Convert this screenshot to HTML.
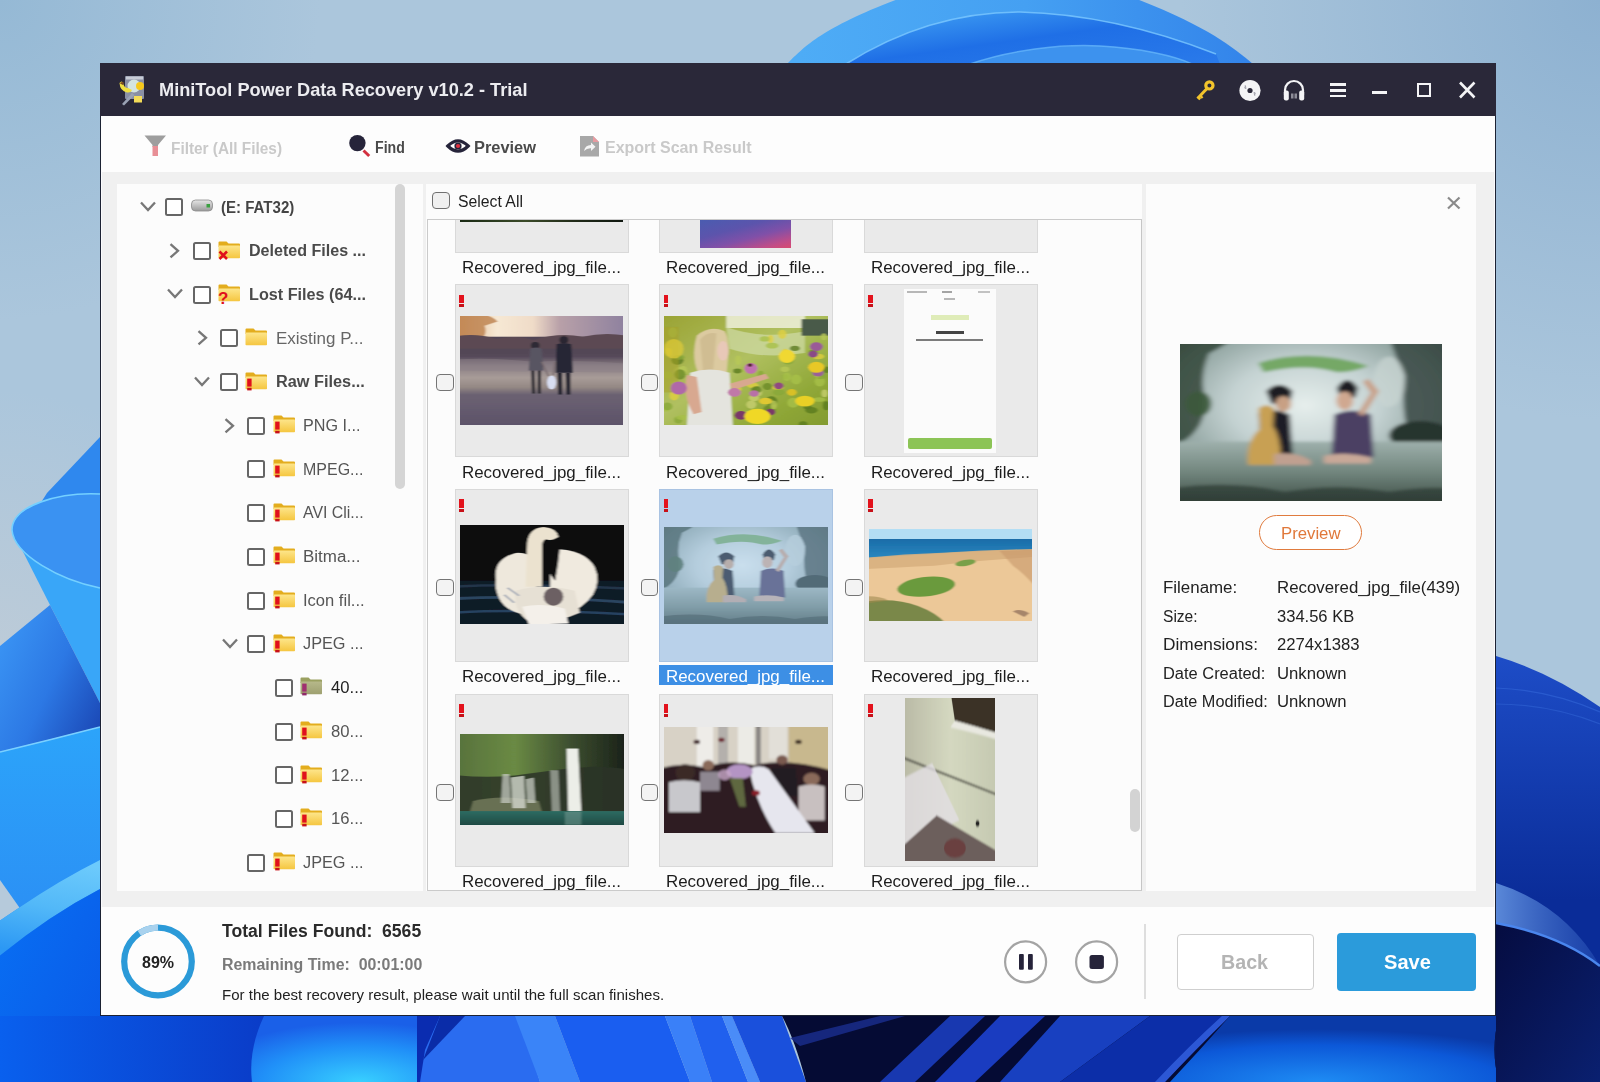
<!DOCTYPE html>
<html><head><meta charset="utf-8"><style>
html,body{margin:0;padding:0;width:1600px;height:1082px;overflow:hidden;background:#b0c8de;}
body{position:relative;font-family:"Liberation Sans",sans-serif;}
.t{position:absolute;white-space:nowrap;}
.r{position:absolute;box-sizing:border-box;}
svg{position:absolute;overflow:visible;}
</style></head><body>
<svg width="1600" height="1082" style="left:0;top:0" viewBox="0 0 1600 1082">
<defs>
<linearGradient id="bgl" x1="0" y1="0" x2="1" y2="1"><stop offset="0" stop-color="#aac5de"/><stop offset="1" stop-color="#b9cde0"/></linearGradient>
<linearGradient id="tri" x1="0" y1="0.2" x2="1" y2="0.9"><stop offset="0" stop-color="#3a94f4"/><stop offset="0.5" stop-color="#2c78e4"/><stop offset="1" stop-color="#1a46b4"/></linearGradient>
<linearGradient id="lowl" x1="0" y1="0" x2="0" y2="1"><stop offset="0" stop-color="#2ca4fa"/><stop offset="1" stop-color="#2a7ef0"/></linearGradient>
<linearGradient id="deepl" x1="0" y1="0" x2="1" y2="1"><stop offset="0" stop-color="#0870f4"/><stop offset="1" stop-color="#0a58e6"/></linearGradient>
<linearGradient id="botl" x1="0" y1="0" x2="1" y2="0"><stop offset="0" stop-color="#0960ee"/><stop offset="1" stop-color="#0a3cc8"/></linearGradient>
<radialGradient id="petal1" cx="0.6" cy="1" r="0.9"><stop offset="0" stop-color="#38d0ff"/><stop offset="0.6" stop-color="#2090f8"/><stop offset="1" stop-color="#1a60e8"/></radialGradient>
<linearGradient id="rblue" gradientUnits="userSpaceOnUse" x1="0" y1="660" x2="0" y2="900"><stop offset="0" stop-color="#1d4cc6"/><stop offset="1" stop-color="#0a2c98"/></linearGradient>
<linearGradient id="rdark" x1="0" y1="0" x2="1" y2="1"><stop offset="0" stop-color="#050c40"/><stop offset="1" stop-color="#0a2070"/></linearGradient>
<linearGradient id="rwedge" x1="0" y1="0" x2="1" y2="0"><stop offset="0" stop-color="#5a88d8"/><stop offset="1" stop-color="#3a68c8" stop-opacity="0.3"/></linearGradient>
<radialGradient id="brglow" cx="0.45" cy="1" r="0.8"><stop offset="0" stop-color="#1e8cf4"/><stop offset="0.7" stop-color="#0c58d8"/><stop offset="1" stop-color="#0a3aa8"/></radialGradient>
<radialGradient id="bloom" cx="0.5" cy="0.3" r="0.6"><stop offset="0" stop-color="#2f80ea"/><stop offset="1" stop-color="#4aa6f4"/></radialGradient>
<linearGradient id="bloom2" x1="0" y1="0" x2="1" y2="1"><stop offset="0" stop-color="#45a8f6"/><stop offset="0.5" stop-color="#1f6fe6"/><stop offset="1" stop-color="#2a7aea"/></linearGradient>
<radialGradient id="cTL" gradientUnits="userSpaceOnUse" cx="0" cy="0" r="320"><stop offset="0" stop-color="#95b9d5"/><stop offset="1" stop-color="#95b9d5" stop-opacity="0"/></radialGradient>
<radialGradient id="cTR" gradientUnits="userSpaceOnUse" cx="1600" cy="0" r="420"><stop offset="0" stop-color="#8db1d1"/><stop offset="1" stop-color="#8db1d1" stop-opacity="0"/></radialGradient>
<radialGradient id="cBL" gradientUnits="userSpaceOnUse" cx="0" cy="650" r="260"><stop offset="0" stop-color="#bccbd8"/><stop offset="1" stop-color="#bccbd8" stop-opacity="0"/></radialGradient>
<linearGradient id="band" x1="0.6" y1="0" x2="0.4" y2="1"><stop offset="0" stop-color="#6ccafc"/><stop offset="0.5" stop-color="#52b8f8"/><stop offset="1" stop-color="#2c98f4"/></linearGradient>
<linearGradient id="bloomO" gradientUnits="userSpaceOnUse" x1="800" y1="0" x2="1250" y2="0"><stop offset="0" stop-color="#4eacf6"/><stop offset="0.5" stop-color="#45a0f2"/><stop offset="1" stop-color="#3384ea"/></linearGradient>
</defs>
<rect width="1600" height="1082" fill="#abc6dc"/>
<rect width="1600" height="1082" fill="url(#cTL)"/>
<rect width="1600" height="1082" fill="url(#cTR)"/>
<rect width="1600" height="1082" fill="url(#cBL)"/>
<!-- top bloom -->
<path d="M787 64 C 812 38, 840 12, 1018 -40 C 1185 8, 1224 40, 1253 64 Z" fill="url(#bloomO)"/>
<path d="M846 64 C 900 30, 960 12, 1020 12 C 1100 14, 1170 36, 1216 54 L1220 64 Z" fill="url(#bloom2)"/>
<path d="M846 64 C 900 30, 960 12, 1020 12 C 1100 14, 1170 36, 1216 54" fill="none" stroke="#7cc8ff" stroke-width="1.5" opacity="0.8"/>
<path d="M970 64 C 1010 50, 1060 44, 1100 46 C 1140 48, 1175 56, 1192 64 Z" fill="#3d92ee"/>
<path d="M970 64 C 1010 50, 1060 44, 1100 46 C 1140 48, 1175 56, 1192 64" fill="none" stroke="#6cbcfc" stroke-width="1.5" opacity="0.7"/>
<!-- left -->
<path d="M100 437 L47 493 L30 520 L100 530 Z" fill="#2f88ee"/>
<path d="M12 530 L50 605 L100 703 L100 588 Z" fill="#39a6f8"/>
<path d="M100 494 C 60 492, 12 505, 12 530 C 14 555, 60 580, 100 588 Z" fill="#3a92f2"/>
<path d="M100 494 C 60 492, 12 505, 12 530 C 14 555, 60 580, 100 588" fill="none" stroke="#74d0ff" stroke-width="1.6"/>
<path d="M50 605 L0 646 L0 752 L100 727 L100 703 Z" fill="url(#tri)"/>
<path d="M0 752 Q 50 740 100 727 L100 1082 L0 1082 Z" fill="url(#lowl)"/>
<path d="M0 752 Q 50 740 100 727" fill="none" stroke="#7ad0ff" stroke-width="1.5"/>
<path d="M0 880 L19.4 907.5 L0 920.5 Z" fill="#b6cadb"/>
<path d="M0 920.5 L19.4 907.5 Q 60 880 100 860 L100 889 Q 50 915 0 955.6 Z" fill="url(#band)"/>
<path d="M0 955.6 Q 50 915 100 889 L100 1082 L0 1082 Z" fill="url(#deepl)"/>
<!-- bottom -->
<rect x="0" y="1016" width="264" height="66" fill="url(#botl)"/>
<path d="M264 1016 Q 248 1050 252 1082 L432 1082 Q 425 1050 417 1016 Z" fill="url(#petal1)"/>
<rect x="417" y="1016" width="30" height="66" fill="#0a2cb0"/>
<path d="M440 1016 L520 1016 L540 1082 L420 1082 L425 1050 Z" fill="#2a6cf0"/>
<path d="M440 1016 L465 1016 L423 1060 Z" fill="#0a2ca8"/>
<path d="M515 1016 L555 1016 L580 1082 L540 1082 Z" fill="#3a84f8"/>
<path d="M555 1016 L665 1016 L690 1082 L580 1082 Z" fill="#1a5ef0"/>
<path d="M665 1016 L690 1016 L712 1082 L690 1082 Z" fill="#3a80f8"/>
<path d="M690 1016 L722 1016 L748 1082 L712 1082 Z" fill="#2060ee"/>
<path d="M722 1016 L732 1016 L760 1082 L748 1082 Z" fill="#4a8cf8"/>
<path d="M732 1016 L782 1016 L806 1082 L760 1082 Z" fill="#1a50dc"/>
<path d="M782 1016 L1600 1016 L1600 1082 L806 1082 Q 795 1040 782 1016 Z" fill="#050b34"/>
<path d="M790 1038 L880 1016 L905 1016 L800 1046 Z" fill="#1a2e90" opacity="0.8"/>
<path d="M880 1082 L950 1016 L985 1016 L915 1082 Z" fill="#1838b0"/>
<path d="M935 1082 L1000 1016 L1045 1016 L975 1082 Z" fill="#1a3cc0"/>
<path d="M1000 1082 L1060 1016 L1150 1016 L1060 1082 Z" fill="#1840c0"/>
<path d="M1060 1082 L1150 1016 L1230 1016 Q 1195 1050 1165 1082 Z" fill="#0c2ea8"/>
<path d="M1230 1016 Q 1195 1050 1165 1082 L1155 1082 Q 1190 1045 1222 1016 Z" fill="#3a6ae8" opacity="0.7"/>
<path d="M1230 1016 L1499 1016 Q 1490 1050 1499 1082 L1170 1082 Q 1200 1050 1230 1016 Z" fill="url(#brglow)"/>
<path d="M1496 1016 L1600 1016 L1600 1082 L1499 1082 Q 1490 1050 1499 1016 Z" fill="#081656"/>
<!-- right -->
<path d="M1496 656 Q 1550 672 1600 707 L1600 1082 L1496 1082 Z" fill="url(#rblue)"/>
<path d="M1496 688 Q 1550 690 1600 712" fill="none" stroke="#3468d8" stroke-width="1.2" opacity="0.6"/>
<path d="M1496 704 Q 1550 704 1600 724" fill="none" stroke="#3468d8" stroke-width="1.2" opacity="0.5"/>
<path d="M1496 923 Q 1560 935 1600 966 L1600 1082 L1496 1082 Z" fill="url(#rdark)"/>
<path d="M1496 883 Q 1565 905 1600 966 Q 1560 935 1496 923 Z" fill="url(#rwedge)"/>
<path d="M1496 923 Q 1560 935 1600 966" fill="none" stroke="#4a86ee" stroke-width="2.5"/>
</svg>
<div class="r" style="left:100.00px;top:63.00px;width:1396.00px;height:953.00px;background:#f0f0f0;border:1px solid #1c2233;"></div><div class="r" style="left:100.00px;top:63.00px;width:1396.00px;height:53.00px;background:#2a2839;"></div><div class="r" style="left:101.00px;top:116.00px;width:1394.00px;height:56.00px;background:#fdfdfd;"></div><div class="r" style="left:101.00px;top:907.00px;width:1394.00px;height:108.00px;background:#fdfdfd;"></div><div class="r" style="left:101.00px;top:171.00px;width:1.30px;height:736.00px;background:#fbfbfd;"></div><div class="r" style="left:1493.70px;top:171.00px;width:1.30px;height:736.00px;background:#fbfbfd;"></div><div class="r" style="left:117.00px;top:184.00px;width:305.50px;height:706.60px;background:#fcfcfc;"></div><div class="r" style="left:425.50px;top:184.00px;width:716.00px;height:707.00px;background:#fcfcfc;"></div><div class="r" style="left:1146.00px;top:184.00px;width:330.00px;height:707.00px;background:#fcfcfc;"></div><svg style="left:118px;top:74px" width="30" height="32" viewBox="0 0 30 32">
<rect x="7" y="2" width="19" height="23" rx="1" fill="#8a90a4"/>
<rect x="8" y="2.5" width="17" height="3" fill="#c8ccd6"/>
<circle cx="16" cy="12" r="6.5" fill="#d4e4e0"/>
<path d="M1.5 9 Q 2 17 9 18.5 Q 13 19 14 16 L 10 14 Q 6 14 5 9 Q 4 6 1.5 9 Z" fill="#f0e040"/>
<path d="M2 9.5 Q 3 7 6 8.5 L 5 11 Z" fill="#7a4a20"/>
<circle cx="22" cy="12" r="4" fill="#f6c81c"/>
<path d="M4 30 L 14 19 L 16.5 21 L 6 31.5 Z" fill="#9aa2b4"/>
<rect x="16" y="22" width="8" height="6.5" fill="#f4dc58"/>
</svg><div class="t" style="left:158.80px;top:80.32px;font-size:19px;line-height:19px;font-weight:700;color:#ececf0;transform:scaleX(0.9570);transform-origin:0 0;">MiniTool Power Data Recovery v10.2 - Trial</div><svg style="left:1194px;top:79px" width="22" height="23" viewBox="0 0 22 23">
<circle cx="15.4" cy="6.4" r="3.6" fill="none" stroke="#f2c42c" stroke-width="3.2"/>
<path d="M13 9.5 L3.5 19.5" stroke="#f2c42c" stroke-width="3"/>
<path d="M6 16.5 L8.6 19 M4.2 18.4 L6.2 20.4" stroke="#f2c42c" stroke-width="2.4"/>
</svg><svg style="left:1238px;top:79px" width="24" height="24" viewBox="0 0 24 24">
<circle cx="12" cy="11.5" r="10.6" fill="#f4f4f6"/>
<circle cx="12" cy="11.5" r="2.6" fill="#2a2839"/>
<path d="M6.5 8.5 L8.3 9.3 M15.7 13.7 L17.5 14.5 M6.8 6.6 L7.8 7.6 M16.2 15.4 L17.2 16.4" stroke="#8a8a98" stroke-width="1.3"/>
</svg><svg style="left:1282px;top:79px" width="24" height="23" viewBox="0 0 24 23">
<path d="M3 16 V11 A9 9 0 0 1 21 11 V16" fill="none" stroke="#f4f4f6" stroke-width="2.2"/>
<rect x="1.8" y="11.5" width="5" height="10" rx="2" fill="#f4f4f6"/>
<rect x="17.2" y="11.5" width="5" height="10" rx="2" fill="#f4f4f6"/>
<rect x="9" y="14.5" width="2.5" height="5" fill="#b8b8c0" opacity="0.7"/><rect x="12.5" y="14.5" width="2.5" height="5" fill="#b8b8c0" opacity="0.7"/>
</svg><div class="r" style="left:1330.00px;top:83.00px;width:15.60px;height:2.80px;background:#f4f4f6;"></div><div class="r" style="left:1330.00px;top:88.80px;width:15.60px;height:2.80px;background:#f4f4f6;"></div><div class="r" style="left:1330.00px;top:94.60px;width:15.60px;height:2.80px;background:#f4f4f6;"></div><div class="r" style="left:1372.00px;top:91.00px;width:15.00px;height:2.80px;background:#f4f4f6;"></div><div class="r" style="left:1417.20px;top:83.20px;width:14.00px;height:14.00px;border:2.6px solid #f4f4f6;"></div><svg style="left:1458px;top:81px" width="18" height="18" viewBox="0 0 18 18">
<path d="M2 1.5 L16.5 16.5 M16.5 1.5 L2 16.5" stroke="#f4f4f6" stroke-width="2.6"/>
</svg><svg style="left:143px;top:134px" width="25" height="24" viewBox="0 0 25 24">
<path d="M1.5 1.5 H23 L15 11 V13 H9.5 V11 Z" fill="#9e9e9e"/>
<rect x="9.5" y="12" width="5.5" height="10" fill="#e88f96"/>
</svg><div class="t" style="left:171.30px;top:140.56px;font-size:16px;line-height:16px;font-weight:700;color:#c9c9c9;transform:scaleX(0.9604);transform-origin:0 0;">Filter (All Files)</div><svg style="left:347px;top:133px" width="26" height="26" viewBox="0 0 26 26">
<circle cx="10.4" cy="10.1" r="8.2" fill="#26243a"/>
<path d="M16.5 17.5 L22.2 23" stroke="#d3303f" stroke-width="3"/>
</svg><div class="t" style="left:375.40px;top:140.16px;font-size:16px;line-height:16px;font-weight:700;color:#4a4a4a;transform:scaleX(0.8826);transform-origin:0 0;">Find</div><svg style="left:446px;top:134px" width="24" height="24" viewBox="0 0 24 24">
<path d="M1.8 12 Q12 1.8 22.2 12 Q12 22.2 1.8 12 Z" fill="#fff" stroke="#26243a" stroke-width="3.2"/>
<circle cx="12" cy="12" r="3.6" fill="#26243a"/>
<circle cx="12" cy="12" r="2.1" fill="#e03040"/>
</svg><div class="t" style="left:473.80px;top:140.16px;font-size:16px;line-height:16px;font-weight:700;color:#4a4a4a;transform:scaleX(1.0251);transform-origin:0 0;">Preview</div><svg style="left:578px;top:134px" width="23" height="24" viewBox="0 0 23 24">
<path d="M2 2 H15 L21 8 V22.5 H2 Z" fill="#a8a8a8"/>
<path d="M15 2 L21 8 H15 Z" fill="#e89aa0"/>
<path d="M6 17 Q7 11 13 11 V8.5 L17.5 12.8 L13 17 V14.3 Q9 14 6 17 Z" fill="#f4f4f4"/>
</svg><div class="t" style="left:605.00px;top:140.36px;font-size:16px;line-height:16px;font-weight:700;color:#c9c9c9;transform:scaleX(0.9986);transform-origin:0 0;">Export Scan Result</div><div class="r" style="left:394.60px;top:184.00px;width:10.40px;height:304.50px;background:#d5d5d5;border-radius:5px;"></div><svg style="left:139.70px;top:201.10px" width="17" height="12" viewBox="0 0 17 12"><path d="M1 1.5 L8 9 L15 1.5" fill="none" stroke="#777" stroke-width="2.3"/></svg><div class="r" style="left:165.20px;top:198.40px;width:18.30px;height:18.00px;border:2.2px solid #666;border-radius:2.5px;background:#fff;"></div><svg style="left:190.70px;top:199.40px" width="23" height="14" viewBox="0 0 23 14">
<defs><linearGradient id="drv" x1="0" y1="0" x2="0" y2="1"><stop offset="0" stop-color="#e6e6e6"/><stop offset="1" stop-color="#9a9a9a"/></linearGradient></defs>
<rect x="0.5" y="1" width="21" height="11" rx="4" fill="url(#drv)" stroke="#8a8a8a" stroke-width="0.8"/>
<rect x="15.5" y="5" width="3.5" height="3.5" fill="#3aa040"/></svg><div class="t" style="left:221.20px;top:199.66px;font-size:16px;line-height:16px;font-weight:700;color:#444;transform:scaleX(0.9405);transform-origin:0 0;">(E: FAT32)</div><svg style="left:169.20px;top:243.08px" width="12" height="16" viewBox="0 0 12 16"><path d="M1.5 1.2 L9 7.8 L1.5 14.4" fill="none" stroke="#777" stroke-width="2.3"/></svg><div class="r" style="left:192.50px;top:242.08px;width:18.30px;height:18.00px;border:2.2px solid #666;border-radius:2.5px;background:#fff;"></div><svg style="left:218.10px;top:240.58px" width="23" height="19" viewBox="0 0 23 19">
<defs><linearGradient id="fg218240" x1="0" y1="0" x2="0" y2="1"><stop offset="0" stop-color="#fde58a"/><stop offset="1" stop-color="#f5c640"/></linearGradient></defs>
<path d="M0.5 1.5 Q0.5 0.5 1.5 0.5 H8.5 L10.5 2.5 H21 Q22 2.5 22 3.5 V6 H0.5 Z" fill="#e3ad1e"/>
<rect x="0.5" y="4.6" width="21.5" height="12.6" rx="0.8" fill="url(#fg218240)"/>
<path d="M1.5 10.5 L9 18 M9 10.5 L1.5 18" stroke="#e0101c" stroke-width="2.6"/></svg><div class="t" style="left:248.50px;top:243.34px;font-size:16px;line-height:16px;font-weight:700;color:#4a4a4a;transform:scaleX(1.0036);transform-origin:0 0;">Deleted Files ...</div><svg style="left:167.00px;top:288.46px" width="17" height="12" viewBox="0 0 17 12"><path d="M1 1.5 L8 9 L15 1.5" fill="none" stroke="#777" stroke-width="2.3"/></svg><div class="r" style="left:192.50px;top:285.76px;width:18.30px;height:18.00px;border:2.2px solid #666;border-radius:2.5px;background:#fff;"></div><svg style="left:218.10px;top:284.26px" width="23" height="19" viewBox="0 0 23 19">
<defs><linearGradient id="fg218284" x1="0" y1="0" x2="0" y2="1"><stop offset="0" stop-color="#fde58a"/><stop offset="1" stop-color="#f5c640"/></linearGradient></defs>
<path d="M0.5 1.5 Q0.5 0.5 1.5 0.5 H8.5 L10.5 2.5 H21 Q22 2.5 22 3.5 V6 H0.5 Z" fill="#e3ad1e"/>
<rect x="0.5" y="4.6" width="21.5" height="12.6" rx="0.8" fill="url(#fg218284)"/>
<text x="0" y="19.5" font-family="Liberation Sans" font-weight="700" font-size="17" fill="#e0101c">?</text></svg><div class="t" style="left:248.50px;top:287.02px;font-size:16px;line-height:16px;font-weight:700;color:#4a4a4a;transform:scaleX(1.0113);transform-origin:0 0;">Lost Files (64...</div><svg style="left:196.50px;top:330.44px" width="12" height="16" viewBox="0 0 12 16"><path d="M1.5 1.2 L9 7.8 L1.5 14.4" fill="none" stroke="#777" stroke-width="2.3"/></svg><div class="r" style="left:219.80px;top:329.44px;width:18.30px;height:18.00px;border:2.2px solid #666;border-radius:2.5px;background:#fff;"></div><svg style="left:245.40px;top:327.94px" width="23" height="19" viewBox="0 0 23 19">
<defs><linearGradient id="fg245327" x1="0" y1="0" x2="0" y2="1"><stop offset="0" stop-color="#fde58a"/><stop offset="1" stop-color="#f5c640"/></linearGradient></defs>
<path d="M0.5 1.5 Q0.5 0.5 1.5 0.5 H8.5 L10.5 2.5 H21 Q22 2.5 22 3.5 V6 H0.5 Z" fill="#e3ad1e"/>
<rect x="0.5" y="4.6" width="21.5" height="12.6" rx="0.8" fill="url(#fg245327)"/>
</svg><div class="t" style="left:275.80px;top:330.70px;font-size:16px;line-height:16px;font-weight:400;color:#666;transform:scaleX(1.0616);transform-origin:0 0;">Existing P...</div><svg style="left:194.30px;top:375.82px" width="17" height="12" viewBox="0 0 17 12"><path d="M1 1.5 L8 9 L15 1.5" fill="none" stroke="#777" stroke-width="2.3"/></svg><div class="r" style="left:219.80px;top:373.12px;width:18.30px;height:18.00px;border:2.2px solid #666;border-radius:2.5px;background:#fff;"></div><svg style="left:245.40px;top:371.62px" width="23" height="19" viewBox="0 0 23 19">
<defs><linearGradient id="fg245371" x1="0" y1="0" x2="0" y2="1"><stop offset="0" stop-color="#fde58a"/><stop offset="1" stop-color="#f5c640"/></linearGradient></defs>
<path d="M0.5 1.5 Q0.5 0.5 1.5 0.5 H8.5 L10.5 2.5 H21 Q22 2.5 22 3.5 V6 H0.5 Z" fill="#e3ad1e"/>
<rect x="0.5" y="4.6" width="21.5" height="12.6" rx="0.8" fill="url(#fg245371)"/>
<rect x="2.2" y="6.6" width="4.4" height="8" fill="#e0101c"/><rect x="2.2" y="15.8" width="4.4" height="2.6" fill="#c81018"/></svg><div class="t" style="left:275.80px;top:374.38px;font-size:16px;line-height:16px;font-weight:700;color:#4a4a4a;transform:scaleX(1.0179);transform-origin:0 0;">Raw Files...</div><svg style="left:223.90px;top:417.80px" width="12" height="16" viewBox="0 0 12 16"><path d="M1.5 1.2 L9 7.8 L1.5 14.4" fill="none" stroke="#777" stroke-width="2.3"/></svg><div class="r" style="left:247.20px;top:416.80px;width:18.30px;height:18.00px;border:2.2px solid #666;border-radius:2.5px;background:#fff;"></div><svg style="left:272.80px;top:415.30px" width="23" height="19" viewBox="0 0 23 19">
<defs><linearGradient id="fg272415" x1="0" y1="0" x2="0" y2="1"><stop offset="0" stop-color="#fde58a"/><stop offset="1" stop-color="#f5c640"/></linearGradient></defs>
<path d="M0.5 1.5 Q0.5 0.5 1.5 0.5 H8.5 L10.5 2.5 H21 Q22 2.5 22 3.5 V6 H0.5 Z" fill="#e3ad1e"/>
<rect x="0.5" y="4.6" width="21.5" height="12.6" rx="0.8" fill="url(#fg272415)"/>
<rect x="2.2" y="6.6" width="4.4" height="8" fill="#e0101c"/><rect x="2.2" y="15.8" width="4.4" height="2.6" fill="#c81018"/></svg><div class="t" style="left:303.20px;top:418.06px;font-size:16px;line-height:16px;font-weight:400;color:#555;transform:scaleX(1.0104);transform-origin:0 0;">PNG I...</div><div class="r" style="left:247.20px;top:460.48px;width:18.30px;height:18.00px;border:2.2px solid #666;border-radius:2.5px;background:#fff;"></div><svg style="left:272.80px;top:458.98px" width="23" height="19" viewBox="0 0 23 19">
<defs><linearGradient id="fg272458" x1="0" y1="0" x2="0" y2="1"><stop offset="0" stop-color="#fde58a"/><stop offset="1" stop-color="#f5c640"/></linearGradient></defs>
<path d="M0.5 1.5 Q0.5 0.5 1.5 0.5 H8.5 L10.5 2.5 H21 Q22 2.5 22 3.5 V6 H0.5 Z" fill="#e3ad1e"/>
<rect x="0.5" y="4.6" width="21.5" height="12.6" rx="0.8" fill="url(#fg272458)"/>
<rect x="2.2" y="6.6" width="4.4" height="8" fill="#e0101c"/><rect x="2.2" y="15.8" width="4.4" height="2.6" fill="#c81018"/></svg><div class="t" style="left:303.20px;top:461.74px;font-size:16px;line-height:16px;font-weight:400;color:#555;transform:scaleX(0.9991);transform-origin:0 0;">MPEG...</div><div class="r" style="left:247.20px;top:504.16px;width:18.30px;height:18.00px;border:2.2px solid #666;border-radius:2.5px;background:#fff;"></div><svg style="left:272.80px;top:502.66px" width="23" height="19" viewBox="0 0 23 19">
<defs><linearGradient id="fg272502" x1="0" y1="0" x2="0" y2="1"><stop offset="0" stop-color="#fde58a"/><stop offset="1" stop-color="#f5c640"/></linearGradient></defs>
<path d="M0.5 1.5 Q0.5 0.5 1.5 0.5 H8.5 L10.5 2.5 H21 Q22 2.5 22 3.5 V6 H0.5 Z" fill="#e3ad1e"/>
<rect x="0.5" y="4.6" width="21.5" height="12.6" rx="0.8" fill="url(#fg272502)"/>
<rect x="2.2" y="6.6" width="4.4" height="8" fill="#e0101c"/><rect x="2.2" y="15.8" width="4.4" height="2.6" fill="#c81018"/></svg><div class="t" style="left:303.20px;top:505.42px;font-size:16px;line-height:16px;font-weight:400;color:#555;transform:scaleX(0.9927);transform-origin:0 0;">AVI Cli...</div><div class="r" style="left:247.20px;top:547.84px;width:18.30px;height:18.00px;border:2.2px solid #666;border-radius:2.5px;background:#fff;"></div><svg style="left:272.80px;top:546.34px" width="23" height="19" viewBox="0 0 23 19">
<defs><linearGradient id="fg272546" x1="0" y1="0" x2="0" y2="1"><stop offset="0" stop-color="#fde58a"/><stop offset="1" stop-color="#f5c640"/></linearGradient></defs>
<path d="M0.5 1.5 Q0.5 0.5 1.5 0.5 H8.5 L10.5 2.5 H21 Q22 2.5 22 3.5 V6 H0.5 Z" fill="#e3ad1e"/>
<rect x="0.5" y="4.6" width="21.5" height="12.6" rx="0.8" fill="url(#fg272546)"/>
<rect x="2.2" y="6.6" width="4.4" height="8" fill="#e0101c"/><rect x="2.2" y="15.8" width="4.4" height="2.6" fill="#c81018"/></svg><div class="t" style="left:303.20px;top:549.10px;font-size:16px;line-height:16px;font-weight:400;color:#555;transform:scaleX(1.0602);transform-origin:0 0;">Bitma...</div><div class="r" style="left:247.20px;top:591.52px;width:18.30px;height:18.00px;border:2.2px solid #666;border-radius:2.5px;background:#fff;"></div><svg style="left:272.80px;top:590.02px" width="23" height="19" viewBox="0 0 23 19">
<defs><linearGradient id="fg272590" x1="0" y1="0" x2="0" y2="1"><stop offset="0" stop-color="#fde58a"/><stop offset="1" stop-color="#f5c640"/></linearGradient></defs>
<path d="M0.5 1.5 Q0.5 0.5 1.5 0.5 H8.5 L10.5 2.5 H21 Q22 2.5 22 3.5 V6 H0.5 Z" fill="#e3ad1e"/>
<rect x="0.5" y="4.6" width="21.5" height="12.6" rx="0.8" fill="url(#fg272590)"/>
<rect x="2.2" y="6.6" width="4.4" height="8" fill="#e0101c"/><rect x="2.2" y="15.8" width="4.4" height="2.6" fill="#c81018"/></svg><div class="t" style="left:303.20px;top:592.78px;font-size:16px;line-height:16px;font-weight:400;color:#555;transform:scaleX(1.0339);transform-origin:0 0;">Icon fil...</div><svg style="left:221.70px;top:637.90px" width="17" height="12" viewBox="0 0 17 12"><path d="M1 1.5 L8 9 L15 1.5" fill="none" stroke="#777" stroke-width="2.3"/></svg><div class="r" style="left:247.20px;top:635.20px;width:18.30px;height:18.00px;border:2.2px solid #666;border-radius:2.5px;background:#fff;"></div><svg style="left:272.80px;top:633.70px" width="23" height="19" viewBox="0 0 23 19">
<defs><linearGradient id="fg272633" x1="0" y1="0" x2="0" y2="1"><stop offset="0" stop-color="#fde58a"/><stop offset="1" stop-color="#f5c640"/></linearGradient></defs>
<path d="M0.5 1.5 Q0.5 0.5 1.5 0.5 H8.5 L10.5 2.5 H21 Q22 2.5 22 3.5 V6 H0.5 Z" fill="#e3ad1e"/>
<rect x="0.5" y="4.6" width="21.5" height="12.6" rx="0.8" fill="url(#fg272633)"/>
<rect x="2.2" y="6.6" width="4.4" height="8" fill="#e0101c"/><rect x="2.2" y="15.8" width="4.4" height="2.6" fill="#c81018"/></svg><div class="t" style="left:303.20px;top:636.46px;font-size:16px;line-height:16px;font-weight:400;color:#555;transform:scaleX(1.0172);transform-origin:0 0;">JPEG ...</div><div class="r" style="left:274.50px;top:678.88px;width:18.30px;height:18.00px;border:2.2px solid #666;border-radius:2.5px;background:#fff;"></div><svg style="left:300.10px;top:677.38px" width="23" height="19" viewBox="0 0 23 19">
<defs><linearGradient id="fg300677" x1="0" y1="0" x2="0" y2="1"><stop offset="0" stop-color="#b6b88a"/><stop offset="1" stop-color="#9ea070"/></linearGradient></defs>
<path d="M0.5 1.5 Q0.5 0.5 1.5 0.5 H8.5 L10.5 2.5 H21 Q22 2.5 22 3.5 V6 H0.5 Z" fill="#9aa060"/>
<rect x="0.5" y="4.6" width="21.5" height="12.6" rx="0.8" fill="url(#fg300677)"/>
<rect x="2.2" y="6.6" width="4.4" height="8" fill="#a03070"/><rect x="2.2" y="15.8" width="4.4" height="2.6" fill="#902868"/></svg><div class="t" style="left:330.50px;top:680.14px;font-size:16px;line-height:16px;font-weight:400;color:#222;transform:scaleX(1.0404);transform-origin:0 0;">40...</div><div class="r" style="left:274.50px;top:722.56px;width:18.30px;height:18.00px;border:2.2px solid #666;border-radius:2.5px;background:#fff;"></div><svg style="left:300.10px;top:721.06px" width="23" height="19" viewBox="0 0 23 19">
<defs><linearGradient id="fg300721" x1="0" y1="0" x2="0" y2="1"><stop offset="0" stop-color="#fde58a"/><stop offset="1" stop-color="#f5c640"/></linearGradient></defs>
<path d="M0.5 1.5 Q0.5 0.5 1.5 0.5 H8.5 L10.5 2.5 H21 Q22 2.5 22 3.5 V6 H0.5 Z" fill="#e3ad1e"/>
<rect x="0.5" y="4.6" width="21.5" height="12.6" rx="0.8" fill="url(#fg300721)"/>
<rect x="2.2" y="6.6" width="4.4" height="8" fill="#e0101c"/><rect x="2.2" y="15.8" width="4.4" height="2.6" fill="#c81018"/></svg><div class="t" style="left:330.50px;top:723.82px;font-size:16px;line-height:16px;font-weight:400;color:#555;transform:scaleX(1.0404);transform-origin:0 0;">80...</div><div class="r" style="left:274.50px;top:766.24px;width:18.30px;height:18.00px;border:2.2px solid #666;border-radius:2.5px;background:#fff;"></div><svg style="left:300.10px;top:764.74px" width="23" height="19" viewBox="0 0 23 19">
<defs><linearGradient id="fg300764" x1="0" y1="0" x2="0" y2="1"><stop offset="0" stop-color="#fde58a"/><stop offset="1" stop-color="#f5c640"/></linearGradient></defs>
<path d="M0.5 1.5 Q0.5 0.5 1.5 0.5 H8.5 L10.5 2.5 H21 Q22 2.5 22 3.5 V6 H0.5 Z" fill="#e3ad1e"/>
<rect x="0.5" y="4.6" width="21.5" height="12.6" rx="0.8" fill="url(#fg300764)"/>
<rect x="2.2" y="6.6" width="4.4" height="8" fill="#e0101c"/><rect x="2.2" y="15.8" width="4.4" height="2.6" fill="#c81018"/></svg><div class="t" style="left:330.50px;top:767.50px;font-size:16px;line-height:16px;font-weight:400;color:#555;transform:scaleX(1.0404);transform-origin:0 0;">12...</div><div class="r" style="left:274.50px;top:809.92px;width:18.30px;height:18.00px;border:2.2px solid #666;border-radius:2.5px;background:#fff;"></div><svg style="left:300.10px;top:808.42px" width="23" height="19" viewBox="0 0 23 19">
<defs><linearGradient id="fg300808" x1="0" y1="0" x2="0" y2="1"><stop offset="0" stop-color="#fde58a"/><stop offset="1" stop-color="#f5c640"/></linearGradient></defs>
<path d="M0.5 1.5 Q0.5 0.5 1.5 0.5 H8.5 L10.5 2.5 H21 Q22 2.5 22 3.5 V6 H0.5 Z" fill="#e3ad1e"/>
<rect x="0.5" y="4.6" width="21.5" height="12.6" rx="0.8" fill="url(#fg300808)"/>
<rect x="2.2" y="6.6" width="4.4" height="8" fill="#e0101c"/><rect x="2.2" y="15.8" width="4.4" height="2.6" fill="#c81018"/></svg><div class="t" style="left:330.50px;top:811.18px;font-size:16px;line-height:16px;font-weight:400;color:#555;transform:scaleX(1.0404);transform-origin:0 0;">16...</div><div class="r" style="left:247.20px;top:853.60px;width:18.30px;height:18.00px;border:2.2px solid #666;border-radius:2.5px;background:#fff;"></div><svg style="left:272.80px;top:852.10px" width="23" height="19" viewBox="0 0 23 19">
<defs><linearGradient id="fg272852" x1="0" y1="0" x2="0" y2="1"><stop offset="0" stop-color="#fde58a"/><stop offset="1" stop-color="#f5c640"/></linearGradient></defs>
<path d="M0.5 1.5 Q0.5 0.5 1.5 0.5 H8.5 L10.5 2.5 H21 Q22 2.5 22 3.5 V6 H0.5 Z" fill="#e3ad1e"/>
<rect x="0.5" y="4.6" width="21.5" height="12.6" rx="0.8" fill="url(#fg272852)"/>
<rect x="2.2" y="6.6" width="4.4" height="8" fill="#e0101c"/><rect x="2.2" y="15.8" width="4.4" height="2.6" fill="#c81018"/></svg><div class="t" style="left:303.20px;top:854.86px;font-size:16px;line-height:16px;font-weight:400;color:#555;transform:scaleX(1.0172);transform-origin:0 0;">JPEG ...</div><div class="r" style="left:427.00px;top:218.50px;width:714.50px;height:672.00px;border:1px solid #cacaca;border-right:1px solid #c6c6c6;"></div><div class="r" style="left:432.40px;top:192.30px;width:17.60px;height:17.20px;border:1.8px solid #707070;border-radius:4px;background:#f0f0f0;"></div><div class="t" style="left:457.80px;top:194.26px;font-size:16px;line-height:16px;font-weight:400;color:#1e1e1e;transform:scaleX(0.9861);transform-origin:0 0;">Select All</div><div style="position:absolute;left:428px;top:219.5px;width:712px;height:670.5px;overflow:hidden"><div class="r" style="left:27.00px;top:-139.85px;width:174.00px;height:173.00px;background:#eaeaea;border:1px solid #d9d9d9;"></div><div class="r" style="left:31.60px;top:0.00px;width:163.90px;height:2.8px;background:linear-gradient(90deg,#1a2a14,#3a4a28 40%,#202a18 70%,#101810)"></div><div class="r" style="left:8.40px;top:-50.25px;width:17.80px;height:17.40px;border:1.7px solid #757575;border-radius:4px;background:#f3f3f3;"></div><div class="t" style="left:33.60px;top:39.36px;font-size:17px;line-height:17px;font-weight:400;color:#1c1c1c;transform:scaleX(0.9949);transform-origin:0 0;">Recovered_jpg_file...</div><div class="r" style="left:231.30px;top:-139.85px;width:174.00px;height:173.00px;background:#eaeaea;border:1px solid #d9d9d9;"></div><div class="r" style="left:271.60px;top:0.00px;width:91.70px;height:28.60px;background:linear-gradient(165deg,#4a5cb0 0%,#5c54ac 35%,#8050a8 60%,#c04c88 85%,#d84a70 100%)"></div><div class="r" style="left:212.70px;top:-50.25px;width:17.80px;height:17.40px;border:1.7px solid #757575;border-radius:4px;background:#f3f3f3;"></div><div class="t" style="left:237.90px;top:39.36px;font-size:17px;line-height:17px;font-weight:400;color:#1c1c1c;transform:scaleX(0.9949);transform-origin:0 0;">Recovered_jpg_file...</div><div class="r" style="left:436.00px;top:-139.85px;width:174.00px;height:173.00px;background:#eaeaea;border:1px solid #d9d9d9;"></div><div class="r" style="left:417.40px;top:-50.25px;width:17.80px;height:17.40px;border:1.7px solid #757575;border-radius:4px;background:#f3f3f3;"></div><div class="t" style="left:442.60px;top:39.36px;font-size:17px;line-height:17px;font-weight:400;color:#1c1c1c;transform:scaleX(0.9949);transform-origin:0 0;">Recovered_jpg_file...</div><div class="r" style="left:27.00px;top:64.90px;width:174.00px;height:173.00px;background:#eaeaea;border:1px solid #d9d9d9;"></div><svg style="left:31.60px;top:96.90px;overflow:hidden" width="163.60" height="109.00" viewBox="0 0 100 100" preserveAspectRatio="none"><defs><filter id="pf1" x="-5%" y="-5%" width="110%" height="110%"><feGaussianBlur stdDeviation="0.6"/></filter><linearGradient id="pf1sky" x1="0" y1="0" x2="1" y2="0"><stop offset="0" stop-color="#e0b080"/><stop offset="0.25" stop-color="#f6e8d4"/><stop offset="0.45" stop-color="#f0dcc8"/><stop offset="0.6" stop-color="#b8a0a8"/><stop offset="1" stop-color="#8a7e9e"/></linearGradient>
<linearGradient id="pf1g" x1="0" y1="0" x2="0" y2="1"><stop offset="0" stop-color="#4e4050"/><stop offset="0.38" stop-color="#544858"/><stop offset="0.46" stop-color="#8a7e84"/><stop offset="0.56" stop-color="#a89c98"/><stop offset="0.64" stop-color="#948884"/><stop offset="0.7" stop-color="#6c6272"/><stop offset="1" stop-color="#5a5068"/></linearGradient></defs><g filter=url(#pf1)><rect x="-5" y="-5" width="110" height="110" fill="url(#pf1g)"/>
<rect x="-5" y="-5" width="110" height="24" fill="url(#pf1sky)"/>
<path d="M-5 -5 L10 -3 Q 20 0 23 5 L15 9 Q 17 16 13 22 L-5 24 Z" fill="#b87a44" opacity="0.75"/>
<path d="M-5 19 Q 10 15 22 21 Q 35 17 45 22 Q 60 15 75 19 Q 90 14 105 19 L105 30 L-5 30 Z" fill="#5c4a52"/>
<path d="M-5 40 Q 20 38 45 42 Q 70 40 105 44 L105 52 L-5 50 Z" fill="#8c8088" opacity="0.5"/>
<ellipse cx="46" cy="27" rx="2.6" ry="3.2" fill="#2e2a34"/>
<path d="M43 30 Q 46.5 28 50 30 L51 50 L42 50 Z" fill="#585462"/>
<path d="M43.5 50 L45.5 50 L46 71 L44 71 Z M47.5 50 L49.5 50 L49.5 71 L47.5 71 Z" fill="#28262e"/>
<ellipse cx="63.5" cy="22" rx="2.7" ry="3.4" fill="#2a2630"/>
<path d="M59 26 Q 63.5 24 68 26 L69 52 L58.5 52 Z" fill="#262636"/>
<path d="M59.5 52 L62.5 52 L62.5 72 L60 72 Z M64.5 52 L67.5 52 L67.5 72 L65 72 Z" fill="#22222e"/>
<ellipse cx="56" cy="61" rx="2.8" ry="6.5" fill="#d8def2"/>
<path d="M50 42 L54 55 M58 42 L57 54" stroke="#7a6c70" stroke-width="1"/></g></svg><div class="r" style="left:31.40px;top:75.40px;width:4.50px;height:8.20px;background:#e3121c;"></div><div class="r" style="left:31.40px;top:84.50px;width:4.50px;height:3.00px;background:#c81018;"></div><div class="r" style="left:8.40px;top:154.50px;width:17.80px;height:17.40px;border:1.7px solid #757575;border-radius:4px;background:#f3f3f3;"></div><div class="t" style="left:33.60px;top:244.11px;font-size:17px;line-height:17px;font-weight:400;color:#1c1c1c;transform:scaleX(0.9949);transform-origin:0 0;">Recovered_jpg_file...</div><div class="r" style="left:231.30px;top:64.90px;width:174.00px;height:173.00px;background:#eaeaea;border:1px solid #d9d9d9;"></div><svg style="left:236.30px;top:96.90px;overflow:hidden" width="163.80" height="109.10" viewBox="0 0 100 100" preserveAspectRatio="none"><defs><filter id="pf2" x="-5%" y="-5%" width="110%" height="110%"><feGaussianBlur stdDeviation="0.55"/></filter><linearGradient id="pf2m" x1="0" y1="0" x2="1" y2="1"><stop offset="0" stop-color="#98a030"/><stop offset="0.45" stop-color="#b0c060"/><stop offset="0.75" stop-color="#90a838"/><stop offset="1" stop-color="#80982e"/></linearGradient></defs><g filter=url(#pf2)><rect x="-5" y="-5" width="110" height="110" fill="url(#pf2m)"/>
<rect x="38" y="-5" width="48" height="16" fill="#eef0dc" opacity="0.85"/>
<path d="M38 10 Q 60 22 86 14 L86 34 Q 60 40 40 30 Z" fill="#d0dca8" opacity="0.7"/>
<rect x="84" y="3" width="21" height="15" fill="#4a5a48"/><ellipse cx="65.1" cy="21.2" rx="1.7" ry="3.7" fill="#e0d040" opacity="0.8"/><ellipse cx="91.0" cy="33.2" rx="2.6" ry="2.2" fill="#6a8a28" opacity="0.8"/><ellipse cx="9.1" cy="51.1" rx="2.9" ry="4.8" fill="#b8c858" opacity="0.8"/><ellipse cx="63.1" cy="64.6" rx="2.9" ry="3.2" fill="#6a8a28" opacity="0.8"/><ellipse cx="97.6" cy="19.0" rx="1.8" ry="3.3" fill="#b8c858" opacity="0.8"/><ellipse cx="54.1" cy="63.5" rx="3.5" ry="2.5" fill="#e0d040" opacity="0.8"/><ellipse cx="58.2" cy="69.3" rx="1.7" ry="4.1" fill="#c8d070" opacity="0.8"/><ellipse cx="56.4" cy="67.6" rx="3.2" ry="3.3" fill="#5a7a20" opacity="0.8"/><ellipse cx="45.3" cy="40.5" rx="1.9" ry="4.3" fill="#b8c858" opacity="0.8"/><ellipse cx="8.2" cy="40.5" rx="3.7" ry="4.2" fill="#5a7a20" opacity="0.8"/><ellipse cx="11.8" cy="50.5" rx="2.4" ry="4.8" fill="#b8c858" opacity="0.8"/><ellipse cx="7.8" cy="62.4" rx="3.7" ry="2.9" fill="#b8c858" opacity="0.8"/><ellipse cx="69.5" cy="65.5" rx="3.5" ry="2.2" fill="#e0d040" opacity="0.8"/><ellipse cx="9.4" cy="37.9" rx="3.2" ry="2.2" fill="#88a838" opacity="0.8"/><ellipse cx="70.1" cy="70.0" rx="3.6" ry="2.9" fill="#88a838" opacity="0.8"/><ellipse cx="2.3" cy="54.2" rx="3.0" ry="3.5" fill="#a8c048" opacity="0.8"/><ellipse cx="73.8" cy="48.8" rx="2.7" ry="2.5" fill="#b8c858" opacity="0.8"/><ellipse cx="55.0" cy="75.0" rx="3.2" ry="3.1" fill="#c8d070" opacity="0.8"/><ellipse cx="1.2" cy="85.6" rx="2.2" ry="2.0" fill="#a8c048" opacity="0.8"/><ellipse cx="56.6" cy="96.0" rx="3.6" ry="4.9" fill="#88a838" opacity="0.8"/><ellipse cx="65.5" cy="77.9" rx="3.7" ry="4.3" fill="#5a7a20" opacity="0.8"/><ellipse cx="87.5" cy="82.8" rx="2.5" ry="3.2" fill="#5a7a20" opacity="0.8"/><ellipse cx="48.2" cy="49.0" rx="1.7" ry="2.6" fill="#a8c048" opacity="0.8"/><ellipse cx="5.3" cy="15.0" rx="2.8" ry="4.8" fill="#a8c048" opacity="0.8"/><ellipse cx="61.4" cy="21.0" rx="3.0" ry="2.4" fill="#a8c048" opacity="0.8"/><ellipse cx="84.9" cy="99.4" rx="2.7" ry="2.9" fill="#5a7a20" opacity="0.8"/><ellipse cx="74.0" cy="55.7" rx="1.9" ry="2.1" fill="#88a838" opacity="0.8"/><ellipse cx="95.1" cy="59.9" rx="3.2" ry="4.7" fill="#a8c048" opacity="0.8"/><ellipse cx="75.8" cy="40.3" rx="3.7" ry="4.1" fill="#88a838" opacity="0.8"/><ellipse cx="53.3" cy="81.2" rx="3.1" ry="3.8" fill="#c8d070" opacity="0.8"/><ellipse cx="78.8" cy="79.5" rx="3.5" ry="4.5" fill="#a8c048" opacity="0.8"/><ellipse cx="74.0" cy="34.3" rx="2.7" ry="4.2" fill="#e0d040" opacity="0.8"/><ellipse cx="99.0" cy="82.2" rx="2.1" ry="4.1" fill="#5a7a20" opacity="0.8"/><ellipse cx="95.7" cy="53.0" rx="4.0" ry="4.9" fill="#88a838" opacity="0.8"/><ellipse cx="90.0" cy="86.4" rx="3.8" ry="3.0" fill="#5a7a20" opacity="0.8"/><ellipse cx="64.3" cy="85.9" rx="3.8" ry="4.3" fill="#6a8a28" opacity="0.8"/><ellipse cx="75.0" cy="55.6" rx="2.6" ry="3.9" fill="#a8c048" opacity="0.8"/><ellipse cx="8.7" cy="95.4" rx="2.5" ry="3.2" fill="#88a838" opacity="0.8"/><ellipse cx="94.7" cy="76.6" rx="4.0" ry="2.1" fill="#a8c048" opacity="0.8"/><ellipse cx="59.1" cy="54.6" rx="1.9" ry="4.5" fill="#88a838" opacity="0.8"/><ellipse cx="98.0" cy="70.9" rx="1.9" ry="3.6" fill="#c8d070" opacity="0.8"/><ellipse cx="2.1" cy="82.9" rx="3.1" ry="3.6" fill="#88a838" opacity="0.8"/><ellipse cx="93.4" cy="51.9" rx="2.0" ry="4.6" fill="#b8c858" opacity="0.8"/><ellipse cx="2.8" cy="33.1" rx="2.1" ry="3.8" fill="#e0d040" opacity="0.8"/><ellipse cx="58.3" cy="91.9" rx="3.6" ry="4.6" fill="#5a7a20" opacity="0.8"/><ellipse cx="51.1" cy="89.2" rx="2.0" ry="2.0" fill="#b8c858" opacity="0.8"/><ellipse cx="79.9" cy="29.6" rx="3.0" ry="2.4" fill="#5a7a20" opacity="0.8"/><ellipse cx="6.2" cy="73.0" rx="2.9" ry="4.4" fill="#e0d040" opacity="0.8"/><ellipse cx="10.6" cy="62.6" rx="2.0" ry="2.1" fill="#a8c048" opacity="0.8"/><ellipse cx="9.8" cy="53.4" rx="3.4" ry="4.7" fill="#6a8a28" opacity="0.8"/><ellipse cx="44.3" cy="67.1" rx="3.0" ry="2.6" fill="#e0d040" opacity="0.8"/><ellipse cx="80.7" cy="58.2" rx="3.2" ry="4.6" fill="#a8c048" opacity="0.8"/><ellipse cx="94.2" cy="37.1" rx="3.7" ry="2.6" fill="#e0d040" opacity="0.8"/><ellipse cx="44.8" cy="50.4" rx="2.6" ry="2.2" fill="#5a7a20" opacity="0.8"/><ellipse cx="66.9" cy="81.6" rx="1.9" ry="4.1" fill="#b8c858" opacity="0.8"/><ellipse cx="66.0" cy="27.2" rx="3.9" ry="2.7" fill="#a8c048" opacity="0.8"/><ellipse cx="95.3" cy="48.9" rx="1.9" ry="4.0" fill="#5a7a20" opacity="0.8"/><ellipse cx="99.4" cy="49.3" rx="2.0" ry="3.0" fill="#5a7a20" opacity="0.8"/><ellipse cx="72.2" cy="16.7" rx="2.6" ry="4.1" fill="#e0d040" opacity="0.8"/><ellipse cx="11.3" cy="93.1" rx="3.9" ry="2.3" fill="#a8c048" opacity="0.8"/>
<rect x="-5" y="10" width="14" height="60" fill="#a8a028" opacity="0.5"/>
<ellipse cx="6" cy="30" rx="6" ry="9" fill="#e0cc38" opacity="0.7"/>
<path d="M20 18 Q 28 8 37 14 Q 40 20 39 40 L38 55 L22 55 Q 16 40 20 18 Z" fill="#dccaa0"/>
<path d="M22 22 Q 26 14 32 16 L30 50 L24 52 Z" fill="#c8b488" opacity="0.6"/>
<ellipse cx="36" cy="32" rx="3.5" ry="9" fill="#e8c8b8"/>
<path d="M16 52 Q 28 46 40 52 L42 100 L14 100 Z" fill="#e4e4de"/>
<path d="M14 54 Q 11 72 18 90 L23 88 L20 56 Z" fill="#d8a890"/>
<path d="M40 62 L62 53 L64 57 L42 68 Z" fill="#d8a890"/>
<ellipse cx="53" cy="48" rx="4" ry="5" fill="#c070b0"/>
<circle cx="52.5" cy="45" r="1.5" fill="#4a2020"/>
<ellipse cx="9" cy="66" rx="5" ry="6" fill="#b068a8"/>
<circle cx="43" cy="70" r="4" fill="#c078a8"/>
<circle cx="55" cy="71" r="3" fill="#b870a8"/>
<circle cx="70" cy="64" r="3" fill="#904880"/>
<circle cx="93" cy="28" r="4" fill="#9a5a98"/>
<circle cx="91" cy="35" r="3" fill="#8a4a88"/>
<circle cx="94" cy="52" r="3.5" fill="#9a6098"/>
<circle cx="47" cy="91" r="4" fill="#7a3868"/>
<circle cx="65" cy="88" r="3" fill="#7a3868"/>
<ellipse cx="57" cy="92" rx="8" ry="7" fill="#f0d828"/>
<ellipse cx="75" cy="37" rx="5" ry="6" fill="#f0d830"/>
<ellipse cx="86" cy="78" rx="6" ry="5" fill="#e8d028"/>
<ellipse cx="93" cy="47" rx="5" ry="5" fill="#e8c828"/>
<ellipse cx="78" cy="70" rx="3" ry="3" fill="#d8c028"/>
<ellipse cx="62" cy="78" rx="4" ry="3" fill="#e0c830"/></g></svg><div class="r" style="left:235.70px;top:75.40px;width:4.50px;height:8.20px;background:#e3121c;"></div><div class="r" style="left:235.70px;top:84.50px;width:4.50px;height:3.00px;background:#c81018;"></div><div class="r" style="left:212.70px;top:154.50px;width:17.80px;height:17.40px;border:1.7px solid #757575;border-radius:4px;background:#f3f3f3;"></div><div class="t" style="left:237.90px;top:244.11px;font-size:17px;line-height:17px;font-weight:400;color:#1c1c1c;transform:scaleX(0.9949);transform-origin:0 0;">Recovered_jpg_file...</div><div class="r" style="left:436.00px;top:64.90px;width:174.00px;height:173.00px;background:#eaeaea;border:1px solid #d9d9d9;"></div><div class="r" style="left:475.90px;top:69.40px;width:91.80px;height:164.10px;background:#fbfbfb"><div class="r" style="left:3px;top:2px;width:20px;height:2px;background:#8a8a8a;opacity:.6"></div><div class="r" style="left:38px;top:2px;width:10px;height:2px;background:#6a6a6a;opacity:.6"></div><div class="r" style="left:74px;top:2px;width:12px;height:2px;background:#8a8a8a;opacity:.5"></div><div class="r" style="left:40px;top:9px;width:11px;height:2px;background:#8a8a8a;opacity:.6"></div><div class="r" style="left:27px;top:26px;width:38px;height:5px;background:#d8e8a8;opacity:.8"></div><div class="r" style="left:32px;top:42px;width:28px;height:3px;background:#303030;opacity:.9"></div><div class="r" style="left:12px;top:50px;width:67px;height:2px;background:#505050;opacity:.75"></div><div class="r" style="left:4px;top:149.6px;width:84px;height:10.2px;background:#8cc456;border-radius:2px"></div></div><div class="r" style="left:440.40px;top:75.40px;width:4.50px;height:8.20px;background:#e3121c;"></div><div class="r" style="left:440.40px;top:84.50px;width:4.50px;height:3.00px;background:#c81018;"></div><div class="r" style="left:417.40px;top:154.50px;width:17.80px;height:17.40px;border:1.7px solid #757575;border-radius:4px;background:#f3f3f3;"></div><div class="t" style="left:442.60px;top:244.11px;font-size:17px;line-height:17px;font-weight:400;color:#1c1c1c;transform:scaleX(0.9949);transform-origin:0 0;">Recovered_jpg_file...</div><div class="r" style="left:27.00px;top:269.40px;width:174.00px;height:173.00px;background:#eaeaea;border:1px solid #d9d9d9;"></div><svg style="left:31.50px;top:305.20px;overflow:hidden" width="164.00" height="99.60" viewBox="0 0 100 100" preserveAspectRatio="none"><defs><filter id="pf3" x="-5%" y="-5%" width="110%" height="110%"><feGaussianBlur stdDeviation="0.55"/></filter></defs><g filter=url(#pf3)><rect x="-5" y="-5" width="110" height="110" fill="#0a0c10"/>
<rect x="-5" y="56" width="110" height="49" fill="#111a26"/>
<path d="M-5 62 Q 30 58 105 64" stroke="#22344a" stroke-width="2.5" fill="none"/>
<path d="M-5 74 Q 40 70 105 78" stroke="#2a4560" stroke-width="3" fill="none"/>
<path d="M-5 88 Q 40 84 105 90" stroke="#264260" stroke-width="2.5" fill="none"/>
<path d="M22 55 Q 20 34 34 28 Q 42 27 45 36 L47 70 L44 92 Q 28 88 24 74 Q 21 64 22 55 Z" fill="#eee8dc"/>
<path d="M56 24 Q 76 24 82 42 Q 86 56 81 70 Q 75 84 64 90 L55 72 L55 40 Z" fill="#f0eadf"/>
<path d="M40 62 L41 18 Q 42 3 51 2 Q 59 3 60 12 L55 16 Q 51 12 50 20 L50 62 Z" fill="#ebe2cf"/>
<path d="M53 16 Q 60 12 61 22 Q 60 40 58 56 Q 53 46 52 36 Z" fill="#0a0c10"/>
<path d="M34 66 Q 50 58 70 66 L73 88 Q 60 98 42 97 Q 32 86 34 66 Z" fill="#e6e0d4"/>
<ellipse cx="57" cy="72" rx="6" ry="9" fill="#6c6064"/>
<path d="M38 82 Q 50 78 64 84 L66 99 L42 100 Z" fill="#f4f0ea"/>
<path d="M27 70 L33 78 M29 63 L36 71" stroke="#b0b4bc" stroke-width="1.5"/></g></svg><div class="r" style="left:31.40px;top:279.90px;width:4.50px;height:8.20px;background:#e3121c;"></div><div class="r" style="left:31.40px;top:289.00px;width:4.50px;height:3.00px;background:#c81018;"></div><div class="r" style="left:8.40px;top:359.00px;width:17.80px;height:17.40px;border:1.7px solid #757575;border-radius:4px;background:#f3f3f3;"></div><div class="t" style="left:33.60px;top:448.61px;font-size:17px;line-height:17px;font-weight:400;color:#1c1c1c;transform:scaleX(0.9949);transform-origin:0 0;">Recovered_jpg_file...</div><div class="r" style="left:231.30px;top:269.40px;width:174.00px;height:173.00px;background:#b9d1ea;border:1px solid #a9c3e2;"></div><svg style="left:235.70px;top:307.00px;overflow:hidden" width="164.00" height="97.80" viewBox="0 0 100 100" preserveAspectRatio="none"><defs><filter id="pf4" x="-5%" y="-5%" width="110%" height="110%"><feGaussianBlur stdDeviation="0.8"/></filter><radialGradient id="pf4mist" cx="0.48" cy="0.4" r="0.65"><stop offset="0" stop-color="#e6eeec"/><stop offset="0.4" stop-color="#c4d2d2"/><stop offset="0.75" stop-color="#8a9e9a"/><stop offset="1" stop-color="#4a5a56"/></radialGradient>
<linearGradient id="pf4w" x1="0" y1="0" x2="0" y2="1"><stop offset="0" stop-color="#9eb0ac"/><stop offset="0.45" stop-color="#72867e"/><stop offset="1" stop-color="#34443c"/></linearGradient></defs><g filter=url(#pf4)><rect x="-5" y="-5" width="110" height="110" fill="url(#pf4mist)"/>
<path d="M-5 -5 L22 -5 Q 16 2 11 6 Q 8 18 9 30 Q 11 45 6 55 Q 3 62 -5 66 Z" fill="#2a3e30" opacity="0.78"/>
<ellipse cx="7" cy="38" rx="5" ry="8" fill="#3c5a3c" opacity="0.9"/>
<path d="M80 -5 L105 -5 L105 66 L88 62 Q 84 40 86 20 Q 82 8 80 -5 Z" fill="#34443f" opacity="0.82"/>
<ellipse cx="80" cy="24" rx="6" ry="16" fill="#c8d4d2" opacity="0.75"/>
<ellipse cx="92" cy="58" rx="12" ry="9" fill="#28342f"/>
<rect x="-5" y="62" width="110" height="43" fill="url(#pf4w)"/>
<path d="M-5 92 Q 20 86 40 94 Q 60 88 80 94 Q 95 90 105 92 L105 105 L-5 105 Z" fill="#25322b" opacity="0.6"/>
<path d="M30 12 Q 50 2 72 14 Q 66 18 60 18 Q 48 12 32 18 Z" fill="#74a866"/>
<path d="M33 30 Q 38 22 43 30 L42 38 L35 38 Z" fill="#1a1a20"/>
<ellipse cx="39.5" cy="38" rx="3" ry="5" fill="#c8a084"/>
<path d="M30 44 Q 36 40 42 45 L43 70 L31 70 Z" fill="#1e1e28"/>
<path d="M30 41 Q 33 37 36 41 L35.5 52 Q 39 60 38.5 77 L26 77 Q 25 62 30.5 54 Z" fill="#c8a052"/>
<path d="M36 70 Q 44 68 50 74 L50 77 L36 77 Z" fill="#c0a090"/>
<path d="M60 28 Q 64 18 68 28 L67 34 L61 34 Z" fill="#1c1c24"/>
<ellipse cx="63" cy="36" rx="3.2" ry="6" fill="#d0a890"/>
<path d="M59 45 Q 66 40 73 45 L74 72 L58 72 Z" fill="#4c4064"/>
<path d="M70 46 L76 30 L72 22 L70 24 L73 31 L68 44 Z" fill="#c8a088"/>
<path d="M55 71 Q 64 68 73 72 L73 76 L55 76 Z" fill="#c8a898"/></g></svg><div class="r" style="left:235.70px;top:307.00px;width:164.00px;height:97.80px;background:#9cc4ee;opacity:0.38"></div><div class="r" style="left:235.70px;top:279.90px;width:4.50px;height:8.20px;background:#e3121c;"></div><div class="r" style="left:235.70px;top:289.00px;width:4.50px;height:3.00px;background:#c81018;"></div><div class="r" style="left:212.70px;top:359.00px;width:17.80px;height:17.40px;border:1.7px solid #757575;border-radius:4px;background:#f3f3f3;"></div><div class="r" style="left:231.20px;top:445.90px;width:173.80px;height:20.10px;background:#3d8fe5;"></div><div class="t" style="left:237.90px;top:448.61px;font-size:17px;line-height:17px;font-weight:400;color:#ffffff;transform:scaleX(0.9949);transform-origin:0 0;">Recovered_jpg_file...</div><div class="r" style="left:436.00px;top:269.40px;width:174.00px;height:173.00px;background:#eaeaea;border:1px solid #d9d9d9;"></div><svg style="left:440.80px;top:309.60px;overflow:hidden" width="163.50" height="91.60" viewBox="0 0 100 100" preserveAspectRatio="none"><defs><filter id="pf5" x="-5%" y="-5%" width="110%" height="110%"><feGaussianBlur stdDeviation="0.6"/></filter><linearGradient id="pf5s" x1="0" y1="0" x2="0" y2="1"><stop offset="0" stop-color="#d8ac78"/><stop offset="0.35" stop-color="#ecc898"/><stop offset="1" stop-color="#ecc898"/></linearGradient>
<linearGradient id="pf5sea" x1="0" y1="0" x2="0" y2="1"><stop offset="0" stop-color="#1a6ca8"/><stop offset="1" stop-color="#2a88c0"/></linearGradient></defs><g filter=url(#pf5)><rect x="-5" y="-5" width="110" height="110" fill="url(#pf5s)"/>
<rect x="-5" y="-5" width="110" height="16" fill="#b4def4"/>
<path d="M-5 11 L105 11 L105 22 Q 70 24 40 27 L-5 32 Z" fill="url(#pf5sea)"/>
<path d="M-5 32 Q 20 27 45 26 Q 75 22 105 22 L105 30 Q 70 34 40 40 Q 15 42 -5 44 Z" fill="#d8b080" opacity="0.9"/>
<path d="M80 24 L105 22 L105 70 Q 96 50 88 40 Z" fill="#c8986a" opacity="0.6"/>
<ellipse cx="35" cy="63" rx="18" ry="10.5" transform="rotate(-14 35 63)" fill="#6a9a3c"/>
<ellipse cx="59" cy="37" rx="6.5" ry="3.2" transform="rotate(-18 59 37)" fill="#78a048"/>
<path d="M-5 80 Q 15 74 30 84 Q 42 92 48 105 L-5 105 Z" fill="#7a8848"/>
<path d="M-5 74 Q 5 72 12 78 L-5 82 Z" fill="#a08a50" opacity="0.6"/>
<path d="M88 90 Q 92 86 98 92 L95 96 Z" fill="#8a6a58" opacity="0.7"/></g></svg><div class="r" style="left:440.40px;top:279.90px;width:4.50px;height:8.20px;background:#e3121c;"></div><div class="r" style="left:440.40px;top:289.00px;width:4.50px;height:3.00px;background:#c81018;"></div><div class="r" style="left:417.40px;top:359.00px;width:17.80px;height:17.40px;border:1.7px solid #757575;border-radius:4px;background:#f3f3f3;"></div><div class="t" style="left:442.60px;top:448.61px;font-size:17px;line-height:17px;font-weight:400;color:#1c1c1c;transform:scaleX(0.9949);transform-origin:0 0;">Recovered_jpg_file...</div><div class="r" style="left:27.00px;top:474.40px;width:174.00px;height:173.00px;background:#eaeaea;border:1px solid #d9d9d9;"></div><svg style="left:31.50px;top:514.70px;overflow:hidden" width="164.00" height="90.70" viewBox="0 0 100 100" preserveAspectRatio="none"><defs><filter id="pf6" x="-5%" y="-5%" width="110%" height="110%"><feGaussianBlur stdDeviation="0.8"/></filter><linearGradient id="pf6f" x1="0" y1="0" x2="1" y2="0"><stop offset="0" stop-color="#56703c"/><stop offset="0.35" stop-color="#6a8a44"/><stop offset="0.65" stop-color="#3e5030"/><stop offset="1" stop-color="#161c16"/></linearGradient>
<linearGradient id="pf6wt" x1="0" y1="0" x2="0" y2="1"><stop offset="0" stop-color="#2e6c62"/><stop offset="1" stop-color="#1a403a"/></linearGradient></defs><g filter=url(#pf6)><rect x="-5" y="-5" width="110" height="110" fill="url(#pf6f)"/>
<path d="M-5 45 Q 20 50 40 44 Q 60 38 80 36 Q 95 36 105 40 L105 86 L-5 86 Z" fill="#2c3428" opacity="0.85"/>
<path d="M8 74 Q 25 66 48 74 L50 86 L6 86 Z" fill="#687052"/>
<path d="M26 44 L30 44 L31 76 L25 76 Z" fill="#c4c8c0" opacity="0.75"/>
<path d="M31 48 L39 46 L40 82 L32 82 Z" fill="#d4d8d0" opacity="0.8"/>
<path d="M40 50 L45 48 L46 76 L41 76 Z" fill="#c8ccc4" opacity="0.75"/>
<path d="M55 40 L60 40 L61 86 L56 86 Z" fill="#bcc0b8" opacity="0.65"/>
<path d="M65 16 L72 16 L74 88 L66 88 Z" fill="#eceee8"/>
<rect x="-5" y="85" width="110" height="20" fill="url(#pf6wt)"/>
<rect x="64" y="86" width="10" height="14" fill="#7aa098" opacity="0.5"/></g></svg><div class="r" style="left:31.40px;top:484.90px;width:4.50px;height:8.20px;background:#e3121c;"></div><div class="r" style="left:31.40px;top:494.00px;width:4.50px;height:3.00px;background:#c81018;"></div><div class="r" style="left:8.40px;top:564.00px;width:17.80px;height:17.40px;border:1.7px solid #757575;border-radius:4px;background:#f3f3f3;"></div><div class="t" style="left:33.60px;top:653.61px;font-size:17px;line-height:17px;font-weight:400;color:#1c1c1c;transform:scaleX(0.9949);transform-origin:0 0;">Recovered_jpg_file...</div><div class="r" style="left:231.30px;top:474.40px;width:174.00px;height:173.00px;background:#eaeaea;border:1px solid #d9d9d9;"></div><svg style="left:235.70px;top:507.50px;overflow:hidden" width="164.00" height="106.30" viewBox="0 0 100 100" preserveAspectRatio="none"><defs><filter id="pf7" x="-5%" y="-5%" width="110%" height="110%"><feGaussianBlur stdDeviation="0.8"/></filter></defs><g filter=url(#pf7)><rect x="-5" y="-5" width="110" height="110" fill="#d8d2c6"/>
<rect x="20" y="-5" width="10" height="45" fill="#eeece8"/>
<rect x="33" y="-5" width="6" height="40" fill="#b4b0ac"/>
<rect x="45" y="-5" width="10" height="40" fill="#ecebe6"/>
<rect x="56" y="-5" width="3" height="40" fill="#8a8684"/>
<rect x="64" y="-5" width="11" height="35" fill="#e2dfd8"/>
<rect x="76" y="-5" width="29" height="60" fill="#c8b88e"/>
<path d="M-5 40 Q 10 32 25 38 Q 40 30 55 36 Q 75 28 105 42 L105 105 L-5 105 Z" fill="#2e1e24"/>
<ellipse cx="13" cy="43" rx="6" ry="8" fill="#3a2a28"/>
<path d="M3 52 Q 12 48 22 52 L22 80 L3 80 Z" fill="#c8c8cc"/>
<ellipse cx="27" cy="36" rx="3.5" ry="5" fill="#8a6a5a"/>
<path d="M22 42 L34 42 L34 60 L22 60 Z" fill="#b8b4c0" opacity="0.7"/>
<ellipse cx="72" cy="31" rx="3.5" ry="4.5" fill="#7a5a50"/>
<path d="M66 38 L80 38 L82 65 L66 65 Z" fill="#241a22"/>
<ellipse cx="90" cy="49" rx="5" ry="6" fill="#8a6a5a"/>
<path d="M82 56 Q 90 52 98 56 L98 88 L82 88 Z" fill="#c8c0c0"/>
<path d="M52 40 Q 58 34 64 40 L92 100 L68 100 Q 56 72 52 40 Z" fill="#e6e6ee"/>
<ellipse cx="46" cy="42" rx="8" ry="7" fill="#b494c4"/>
<ellipse cx="37" cy="45" rx="4" ry="5" fill="#c8a8c8" opacity="0.8"/>
<path d="M40 48 L46 75 L50 75 L48 48 Z" fill="#6a7a48" opacity="0.8"/>
<circle cx="56" cy="62" r="2.5" fill="#8a1a28"/>
<circle cx="20" cy="14" r="2" fill="#3a1a20"/>
<circle cx="35" cy="12" r="2" fill="#6a1a28"/>
<circle cx="82" cy="14" r="2" fill="#3a2a20"/></g></svg><div class="r" style="left:235.70px;top:484.90px;width:4.50px;height:8.20px;background:#e3121c;"></div><div class="r" style="left:235.70px;top:494.00px;width:4.50px;height:3.00px;background:#c81018;"></div><div class="r" style="left:212.70px;top:564.00px;width:17.80px;height:17.40px;border:1.7px solid #757575;border-radius:4px;background:#f3f3f3;"></div><div class="t" style="left:237.90px;top:653.61px;font-size:17px;line-height:17px;font-weight:400;color:#1c1c1c;transform:scaleX(0.9949);transform-origin:0 0;">Recovered_jpg_file...</div><div class="r" style="left:436.00px;top:474.40px;width:174.00px;height:173.00px;background:#eaeaea;border:1px solid #d9d9d9;"></div><svg style="left:476.50px;top:478.90px;overflow:hidden" width="90.70" height="163.10" viewBox="0 0 100 100" preserveAspectRatio="none"><defs><filter id="pf8" x="-5%" y="-5%" width="110%" height="110%"><feGaussianBlur stdDeviation="0.7"/></filter><linearGradient id="pf8w" x1="0" y1="0" x2="1" y2="0"><stop offset="0" stop-color="#b8b8a4"/><stop offset="0.5" stop-color="#d4d8c0"/><stop offset="1" stop-color="#c4c8b0"/></linearGradient></defs><g filter=url(#pf8)><rect x="-5" y="-5" width="110" height="110" fill="url(#pf8w)"/>
<path d="M50 -5 L105 -5 L105 22 Q 80 18 55 14 Z" fill="#3a3028"/>
<path d="M55 14 Q 80 18 105 22 L105 26 Q 80 22 50 18 Z" fill="#e8e8e0"/>
<path d="M-5 36 L105 60" stroke="#5a5a50" stroke-width="1.4"/>
<path d="M-5 50 L30 40 L60 75 L-5 92 Z" fill="#e2dee4" opacity="0.8"/>
<path d="M-5 92 L35 72 L105 95 L105 105 L-5 105 Z" fill="#6c5e5c"/>
<ellipse cx="55" cy="92" rx="12" ry="6" fill="#6a3a3a" opacity="0.8"/>
<circle cx="80" cy="77" r="2" fill="#202020"/></g></svg><div class="r" style="left:440.40px;top:484.90px;width:4.50px;height:8.20px;background:#e3121c;"></div><div class="r" style="left:440.40px;top:494.00px;width:4.50px;height:3.00px;background:#c81018;"></div><div class="r" style="left:417.40px;top:564.00px;width:17.80px;height:17.40px;border:1.7px solid #757575;border-radius:4px;background:#f3f3f3;"></div><div class="t" style="left:442.60px;top:653.61px;font-size:17px;line-height:17px;font-weight:400;color:#1c1c1c;transform:scaleX(0.9949);transform-origin:0 0;">Recovered_jpg_file...</div></div><div class="r" style="left:1129.50px;top:788.70px;width:10.60px;height:43.10px;background:#d3d3d3;border-radius:5px;"></div><svg style="left:1446px;top:196px" width="16" height="14" viewBox="0 0 16 14">
<path d="M2 1.5 L13.5 12.5 M13.5 1.5 L2 12.5" stroke="#8a8a8a" stroke-width="2.2"/></svg><svg style="left:1180.20px;top:343.90px;overflow:hidden" width="261.50" height="157.30" viewBox="0 0 100 100" preserveAspectRatio="none"><defs><filter id="pf9" x="-5%" y="-5%" width="110%" height="110%"><feGaussianBlur stdDeviation="1.1"/></filter><radialGradient id="pf9mist" cx="0.48" cy="0.4" r="0.65"><stop offset="0" stop-color="#e6eeec"/><stop offset="0.4" stop-color="#c4d2d2"/><stop offset="0.75" stop-color="#8a9e9a"/><stop offset="1" stop-color="#4a5a56"/></radialGradient>
<linearGradient id="pf9w" x1="0" y1="0" x2="0" y2="1"><stop offset="0" stop-color="#9eb0ac"/><stop offset="0.45" stop-color="#72867e"/><stop offset="1" stop-color="#34443c"/></linearGradient></defs><g filter=url(#pf9)><rect x="-5" y="-5" width="110" height="110" fill="url(#pf9mist)"/>
<path d="M-5 -5 L22 -5 Q 16 2 11 6 Q 8 18 9 30 Q 11 45 6 55 Q 3 62 -5 66 Z" fill="#2a3e30" opacity="0.78"/>
<ellipse cx="7" cy="38" rx="5" ry="8" fill="#3c5a3c" opacity="0.9"/>
<path d="M80 -5 L105 -5 L105 66 L88 62 Q 84 40 86 20 Q 82 8 80 -5 Z" fill="#34443f" opacity="0.82"/>
<ellipse cx="80" cy="24" rx="6" ry="16" fill="#c8d4d2" opacity="0.75"/>
<ellipse cx="92" cy="58" rx="12" ry="9" fill="#28342f"/>
<rect x="-5" y="62" width="110" height="43" fill="url(#pf9w)"/>
<path d="M-5 92 Q 20 86 40 94 Q 60 88 80 94 Q 95 90 105 92 L105 105 L-5 105 Z" fill="#25322b" opacity="0.6"/>
<path d="M30 12 Q 50 2 72 14 Q 66 18 60 18 Q 48 12 32 18 Z" fill="#74a866"/>
<path d="M33 30 Q 38 22 43 30 L42 38 L35 38 Z" fill="#1a1a20"/>
<ellipse cx="39.5" cy="38" rx="3" ry="5" fill="#c8a084"/>
<path d="M30 44 Q 36 40 42 45 L43 70 L31 70 Z" fill="#1e1e28"/>
<path d="M30 41 Q 33 37 36 41 L35.5 52 Q 39 60 38.5 77 L26 77 Q 25 62 30.5 54 Z" fill="#c8a052"/>
<path d="M36 70 Q 44 68 50 74 L50 77 L36 77 Z" fill="#c0a090"/>
<path d="M60 28 Q 64 18 68 28 L67 34 L61 34 Z" fill="#1c1c24"/>
<ellipse cx="63" cy="36" rx="3.2" ry="6" fill="#d0a890"/>
<path d="M59 45 Q 66 40 73 45 L74 72 L58 72 Z" fill="#4c4064"/>
<path d="M70 46 L76 30 L72 22 L70 24 L73 31 L68 44 Z" fill="#c8a088"/>
<path d="M55 71 Q 64 68 73 72 L73 76 L55 76 Z" fill="#c8a898"/></g></svg><div class="r" style="left:1259.20px;top:515.20px;width:103.20px;height:35.10px;border:1.6px solid #e07b3e;border-radius:18px;background:#fff;"></div><div class="t" style="left:1280.50px;top:526.06px;font-size:16px;line-height:16px;font-weight:400;color:#e0783a;transform:scaleX(1.0456);transform-origin:0 0;">Preview</div><div class="t" style="left:1162.80px;top:579.96px;font-size:16px;line-height:16px;font-weight:400;color:#222;transform:scaleX(1.0562);transform-origin:0 0;">Filename:</div><div class="t" style="left:1277.30px;top:579.96px;font-size:16px;line-height:16px;font-weight:400;color:#222;transform:scaleX(1.0503);transform-origin:0 0;">Recovered_jpg_file(439)</div><div class="t" style="left:1162.80px;top:608.51px;font-size:16px;line-height:16px;font-weight:400;color:#222;transform:scaleX(0.9725);transform-origin:0 0;">Size:</div><div class="t" style="left:1277.30px;top:608.51px;font-size:16px;line-height:16px;font-weight:400;color:#222;transform:scaleX(1.0330);transform-origin:0 0;">334.56 KB</div><div class="t" style="left:1162.80px;top:637.06px;font-size:16px;line-height:16px;font-weight:400;color:#222;transform:scaleX(1.0792);transform-origin:0 0;">Dimensions:</div><div class="t" style="left:1277.30px;top:637.06px;font-size:16px;line-height:16px;font-weight:400;color:#222;transform:scaleX(1.0418);transform-origin:0 0;">2274x1383</div><div class="t" style="left:1162.80px;top:665.61px;font-size:16px;line-height:16px;font-weight:400;color:#222;transform:scaleX(1.0270);transform-origin:0 0;">Date Created:</div><div class="t" style="left:1277.30px;top:665.61px;font-size:16px;line-height:16px;font-weight:400;color:#222;transform:scaleX(1.0434);transform-origin:0 0;">Unknown</div><div class="t" style="left:1162.80px;top:694.16px;font-size:16px;line-height:16px;font-weight:400;color:#222;transform:scaleX(1.0158);transform-origin:0 0;">Date Modified:</div><div class="t" style="left:1277.30px;top:694.16px;font-size:16px;line-height:16px;font-weight:400;color:#222;transform:scaleX(1.0434);transform-origin:0 0;">Unknown</div><svg style="left:118px;top:921px" width="80" height="80" viewBox="0 0 80 80">
<circle cx="40" cy="40.5" r="33.8" fill="none" stroke="#2b9ad8" stroke-width="6.2"/>
<path d="M40 6.7 A33.8 33.8 0 0 0 21.4 12.3" fill="none" stroke="#a9d2ee" stroke-width="6.2"/>
</svg><div class="t" style="left:141.60px;top:954.31px;font-size:17px;line-height:17px;font-weight:700;color:#222;transform:scaleX(0.9433);transform-origin:0 0;">89%</div><div class="t" style="left:221.80px;top:921.76px;font-size:18px;line-height:18px;font-weight:700;color:#2a2a2a;transform:scaleX(0.9779);transform-origin:0 0;">Total Files Found:&nbsp; 6565</div><div class="t" style="left:221.80px;top:956.66px;font-size:16px;line-height:16px;font-weight:700;color:#7a7a7a;transform:scaleX(0.9937);transform-origin:0 0;">Remaining Time:&nbsp; 00:01:00</div><div class="t" style="left:221.80px;top:986.90px;font-size:15px;line-height:15px;font-weight:400;color:#222;transform:scaleX(1.0024);transform-origin:0 0;">For the best recovery result, please wait until the full scan finishes.</div><svg style="left:1002px;top:938px" width="48" height="48" viewBox="0 0 48 48">
<circle cx="23.6" cy="23.9" r="20.5" fill="#fff" stroke="#a4a4a4" stroke-width="2.2"/>
<rect x="17" y="16" width="4.8" height="15.7" rx="1" fill="#26243a"/>
<rect x="26" y="16" width="4.8" height="15.7" rx="1" fill="#26243a"/>
</svg><svg style="left:1073px;top:938px" width="48" height="48" viewBox="0 0 48 48">
<circle cx="23.6" cy="23.9" r="20.5" fill="#fff" stroke="#a4a4a4" stroke-width="2.2"/>
<rect x="16.5" y="17" width="14.4" height="14" rx="2.5" fill="#26243a"/>
</svg><div class="r" style="left:1144.00px;top:924.40px;width:1.60px;height:75.00px;background:#dedede;"></div><div class="r" style="left:1176.60px;top:933.80px;width:137.80px;height:56.20px;border:1.4px solid #cfcfcf;border-radius:4px;background:#fff;"></div><div class="t" style="left:1221.00px;top:952.07px;font-size:20px;line-height:20px;font-weight:700;color:#b4b4b4;transform:scaleX(0.9830);transform-origin:0 0;">Back</div><div class="r" style="left:1336.90px;top:933.00px;width:139.00px;height:57.60px;background:#2b9bdb;border-radius:4px;"></div><div class="t" style="left:1383.70px;top:952.07px;font-size:20px;line-height:20px;font-weight:700;color:#ffffff;transform:scaleX(1.0039);transform-origin:0 0;">Save</div>
</body></html>
